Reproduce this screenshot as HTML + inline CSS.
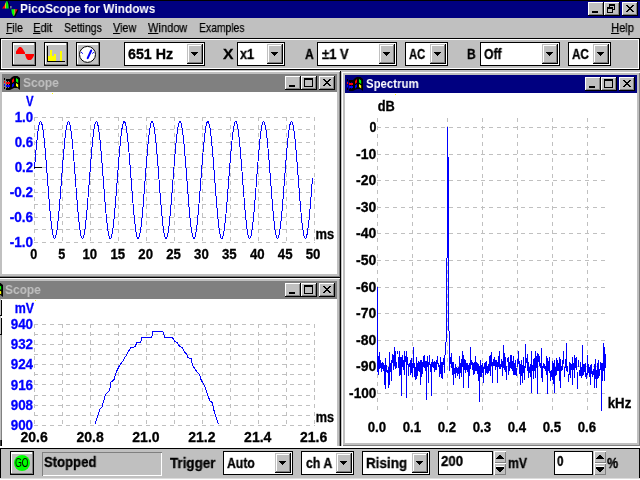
<!DOCTYPE html>
<html lang="en"><head><meta charset="utf-8"><title>PicoScope for Windows</title>
<style>
html,body{margin:0;padding:0}
body{width:640px;height:480px;overflow:hidden;background:#c0c0c0;position:relative;font-family:"Liberation Sans",sans-serif;color:#000}
div,.a{position:absolute}
svg{display:block;overflow:hidden;will-change:transform}
.t{will-change:transform;position:absolute;white-space:nowrap;line-height:1;transform-origin:0 0;display:block}
.t u{text-decoration:underline;text-underline-offset:1px}
.cb{background:#c0c0c0;box-shadow:inset -1px -1px 0 #000,inset 1px 1px 0 #fff,inset -2px -2px 0 #808080}
.cb i{position:absolute;background:#000;display:block}
.tbar{background:#c0c0c0;box-sizing:border-box;border:1px solid #000;box-shadow:inset 1px 1px 0 #fff,inset -1px -1px 0 #fff}
.tbar>div{margin:-1px 0 0 -1px}
.tbtn{background:#c0c0c0;box-sizing:border-box;border:1px solid #000;box-shadow:inset -1px -1px 0 #808080,inset 1px 2px 0 #fff}
.combo{background:#fff;box-sizing:border-box;border:1px solid #000}
.ddb{background:#c0c0c0;box-shadow:inset -1px -1px 0 #000,inset 1px 1px 0 #c0c0c0,inset -2px -2px 0 #808080,inset 2px 2px 0 #fff}
.win{background:#c0c0c0;box-shadow:inset 1px 1px 0 #c0c0c0,inset -1px -1px 0 #000,inset 2px 2px 0 #fff,inset -2px -2px 0 #808080}
.sp{background:#c0c0c0;box-shadow:inset 1px 1px 0 #fff,inset -1px -1px 0 #808080}
</style></head>
<body>
<div class="a" style="left:0px;top:0px;width:640px;height:1px;background:#000"></div>
<div class="a" style="left:0px;top:1px;width:640px;height:17px;background:#000080"></div>
<svg class="a" style="left:1px;top:0px" width="18" height="18" viewBox="0 0 18 18">
<defs><clipPath id="c1"><path d="M1 8.6 L3.5 5 L5.5 1 L6.2 1 L7.3 4 L8.2 8.6 Z"/></clipPath>
<clipPath id="c2"><path d="M10 9.2 L16.6 9.2 L15 12 L13 16 L12.3 16 L10.8 13 Z"/></clipPath></defs>
<path d="M6.2 1 L7.2 1 L9.4 6 L9.4 8.6 L8.2 8.6 L7.3 4 Z" fill="#000"/>
<path d="M16.6 9.2 L17.3 9.2 L17.3 11 L14.3 16.7 L12.3 16.7 L12.3 16 L13 16 L15 12 Z" fill="#000"/>
<rect x="9.4" y="6" width="1" height="2.4" fill="#c0c0c0"/><rect x="9.4" y="10.5" width="1" height="1" fill="#000"/>
<g clip-path="url(#c1)"><rect x="0" y="0" width="4.2" height="10" fill="#f00"/><rect x="4.2" y="0" width="1" height="10" fill="#ff0"/><rect x="5.2" y="0" width="2.3" height="10" fill="#0f0"/><rect x="7.5" y="0" width="1" height="10" fill="#008080"/></g>
<g clip-path="url(#c2)"><rect x="10" y="8" width="1" height="10" fill="#008080"/><rect x="10.8" y="8" width="2.6" height="10" fill="#0f0"/><rect x="13.4" y="8" width="1" height="10" fill="#ff0"/><rect x="14.4" y="8" width="3" height="10" fill="#f00"/></g>
</svg>
<span class="t" style="left:20.20px;top:2.40px;font-size:13px;font-weight:bold;color:#fff;transform:scaleX(0.9146)">PicoScope for Windows</span>
<div class="a cb" style="left:588px;top:2px;width:16px;height:14px;"><i style="left:4px;top:9px;width:6px;height:2px"></i></div>
<div class="a cb" style="left:604px;top:2px;width:16px;height:14px;"><i style="left:5px;top:2px;width:6px;height:6px;background:none;border:1px solid #000;border-top-width:2px;box-sizing:border-box"></i><i style="left:3px;top:5px;width:6px;height:6px;background:#c0c0c0;border:1px solid #000;border-top-width:2px;box-sizing:border-box"></i></div>
<div class="a cb" style="left:622px;top:2px;width:16px;height:14px;"><svg class="a" style="left:4px;top:3px" width="8" height="7" viewBox="0 0 8 7" shape-rendering="crispEdges"><path d="M0 0h2v1h1v1h2v-1h1v-1h2v1h-1v1h-1v1h-1v1h1v1h1v1h1v1h-2v-1h-1v-1h-2v1h-1v1h-2v-1h1v-1h1v-1h1v-1h-1v-1h-1v-1h-1z"/></svg></div>
<span class="t" style="left:5.79px;top:21.00px;font-size:13px;-webkit-text-stroke:0.25px;transform:scaleX(0.8064)"><u>F</u>ile</span>
<span class="t" style="left:32.85px;top:21.00px;font-size:13px;-webkit-text-stroke:0.25px;transform:scaleX(0.8536)"><u>E</u>dit</span>
<span class="t" style="left:64.10px;top:21.00px;font-size:13px;-webkit-text-stroke:0.25px;transform:scaleX(0.8047)">Settings</span>
<span class="t" style="left:113.45px;top:21.00px;font-size:13px;-webkit-text-stroke:0.25px;transform:scaleX(0.8353)"><u>V</u>iew</span>
<span class="t" style="left:148.45px;top:21.00px;font-size:13px;-webkit-text-stroke:0.25px;transform:scaleX(0.8506)"><u>W</u>indow</span>
<span class="t" style="left:199.40px;top:21.00px;font-size:13px;-webkit-text-stroke:0.25px;transform:scaleX(0.7971)">Examples</span>
<span class="t" style="left:611.34px;top:21.00px;font-size:13px;-webkit-text-stroke:0.25px;transform:scaleX(0.8586)"><u>H</u>elp</span>
<div class="a tbar" style="left:0px;top:38px;width:640px;height:32px;"><div class="a tbtn" style="left:12px;top:4px;width:24px;height:24px;"><svg class="a" style="left:0;top:0" width="22" height="22" viewBox="13 43 22 22"><path d="M16 54V51.5L17 50L18.5 47.7L19.5 47H21L22.5 48.5L24 51L25 52.5V54Z M25 54H34V55.5L33 57.5L31.5 59.5L30.5 60H28L26.5 58.5L25.5 56Z" fill="#f00"/></svg></div><div class="a tbtn" style="left:44px;top:4px;width:24px;height:24px;"><svg class="a" style="left:0;top:0" width="22" height="22" viewBox="13 43 22 22" shape-rendering="crispEdges"><path d="M47.5 46V61.5H65" transform="translate(-32 0)" fill="none" stroke="#000"/><path d="M16 61V56H18V50H20V56H21.5V54H24V61Z M28 51H30V61H28Z" fill="#ff0"/></svg></div><div class="a tbtn" style="left:76px;top:4px;width:24px;height:24px;"><svg class="a" style="left:0;top:0" width="22" height="22" viewBox="0 0 22 22"><circle cx="10.5" cy="11.4" r="8" fill="#fff" stroke="#000" stroke-width="1"/><path d="M14.2 7.5L10.7 15.1" stroke="#00f" stroke-width="2" stroke-linecap="round" fill="none"/><path d="M4 9l1.9 1.7M16.8 9l-1.4 1.7" stroke="#00f" stroke-width="1" fill="none"/></svg></div></div>
<div class="a combo" style="left:124px;top:42px;width:81px;height:24px;"><div class="a ddb" style="left:62px;top:1px;width:16px;height:20px;"><svg class="a" style="left:4px;top:8px" width="7" height="4" viewBox="0 0 7 4" shape-rendering="crispEdges"><path d="M0 0h7v1h-1v1h-1v1h-1v1h-1v-1h-1v-1h-1v-1h-1z"/></svg></div></div><span class="t" style="left:128.20px;top:47.15px;font-size:14px;font-weight:bold;-webkit-text-stroke:0.3px;transform:scaleX(1.0167)">651 Hz</span>
<span class="t" style="left:222.90px;top:47.15px;font-size:14px;font-weight:bold;-webkit-text-stroke:0.3px;transform:scaleX(1.1200)">X</span>
<div class="a combo" style="left:237px;top:42px;width:48px;height:24px;"><div class="a ddb" style="left:29px;top:1px;width:16px;height:20px;"><svg class="a" style="left:4px;top:8px" width="7" height="4" viewBox="0 0 7 4" shape-rendering="crispEdges"><path d="M0 0h7v1h-1v1h-1v1h-1v1h-1v-1h-1v-1h-1v-1h-1z"/></svg></div></div><span class="t" style="left:240.40px;top:47.15px;font-size:14px;font-weight:bold;-webkit-text-stroke:0.3px;transform:scaleX(0.9059)">x1</span>
<span class="t" style="left:304.70px;top:47.15px;font-size:14px;font-weight:bold;-webkit-text-stroke:0.3px;transform:scaleX(0.8600)">A</span>
<div class="a combo" style="left:317px;top:42px;width:80px;height:24px;"><div class="a ddb" style="left:61px;top:1px;width:16px;height:20px;"><svg class="a" style="left:4px;top:8px" width="7" height="4" viewBox="0 0 7 4" shape-rendering="crispEdges"><path d="M0 0h7v1h-1v1h-1v1h-1v1h-1v-1h-1v-1h-1v-1h-1z"/></svg></div></div><span class="t" style="left:321.70px;top:47.15px;font-size:14px;font-weight:bold;-webkit-text-stroke:0.3px;transform:scaleX(0.9316)">±1 V</span>
<div class="a combo" style="left:405px;top:42px;width:43px;height:24px;"><div class="a ddb" style="left:24px;top:1px;width:16px;height:20px;"><svg class="a" style="left:4px;top:8px" width="7" height="4" viewBox="0 0 7 4" shape-rendering="crispEdges"><path d="M0 0h7v1h-1v1h-1v1h-1v1h-1v-1h-1v-1h-1v-1h-1z"/></svg></div></div><span class="t" style="left:409.10px;top:47.15px;font-size:14px;font-weight:bold;-webkit-text-stroke:0.3px;transform:scaleX(0.8056)">AC</span>
<span class="t" style="left:466.70px;top:47.15px;font-size:14px;font-weight:bold;-webkit-text-stroke:0.3px;transform:scaleX(0.8600)">B</span>
<div class="a combo" style="left:480px;top:42px;width:80px;height:24px;"><div class="a ddb" style="left:61px;top:1px;width:16px;height:20px;"><svg class="a" style="left:4px;top:8px" width="7" height="4" viewBox="0 0 7 4" shape-rendering="crispEdges"><path d="M0 0h7v1h-1v1h-1v1h-1v1h-1v-1h-1v-1h-1v-1h-1z"/></svg></div></div><span class="t" style="left:484.45px;top:47.15px;font-size:14px;font-weight:bold;-webkit-text-stroke:0.3px;transform:scaleX(0.8685)">Off</span>
<div class="a combo" style="left:568px;top:42px;width:43px;height:24px;"><div class="a ddb" style="left:24px;top:1px;width:16px;height:20px;"><svg class="a" style="left:4px;top:8px" width="7" height="4" viewBox="0 0 7 4" shape-rendering="crispEdges"><path d="M0 0h7v1h-1v1h-1v1h-1v1h-1v-1h-1v-1h-1v-1h-1z"/></svg></div></div><span class="t" style="left:572.00px;top:47.15px;font-size:14px;font-weight:bold;-webkit-text-stroke:0.3px;transform:scaleX(0.8354)">AC</span>
<div class="a" style="left:0px;top:70px;width:640px;height:376px;overflow:hidden"><div class="a win" style="left:-19px;top:207px;width:360px;height:200px;"><div class="a" style="left:4px;top:4px;width:352px;height:18px;background:#808080"><svg class="a" style="left:1px;top:2px" width="17" height="14" viewBox="0 0 17 14"><rect x="1" y="2" width="1" height="2" fill="#000"/><rect x="1" y="5" width="1" height="2" fill="#f00"/><rect x="1" y="8" width="1" height="2" fill="#00f"/><rect x="1" y="11" width="1" height="2" fill="#000"/><rect x="3" y="3" width="4" height="2" fill="#000"/><rect x="3" y="6" width="4" height="2" fill="#f00"/><rect x="3" y="9" width="4" height="2" fill="#00f"/><rect x="3" y="12" width="4" height="2" fill="#000"/><rect x="4" y="5" width="1" height="1" fill="#000"/><rect x="6" y="5" width="1" height="1" fill="#000"/><rect x="4" y="8" width="1" height="1" fill="#000"/><rect x="6" y="8" width="1" height="1" fill="#000"/><rect x="4" y="11" width="1" height="1" fill="#000"/><rect x="6" y="11" width="1" height="1" fill="#000"/><path d="M7 3 L9 1 L11 0 L14.5 0 L17 2 L17 14 L14.5 12 L11 12 L9 13 L7 14 Z" fill="#000"/><path d="M9 4 L11 2 L11 5.5 L9 7 Z" fill="#f00"/><path d="M13 2 L15.2 3.5 L15.2 7 L13 5.5 Z" fill="#0f0"/><path d="M9 8.5 L11 7 L11 10 L9 11.5 Z" fill="#00f"/><path d="M13 7 L15.2 8.5 L15.2 11.5 L13 10 Z" fill="#ff0"/></svg><div class="a cb" style="left:300px;top:2px;width:16px;height:14px;"><i style="left:4px;top:9px;width:6px;height:2px"></i></div><div class="a cb" style="left:316px;top:2px;width:16px;height:14px;"><i style="left:3px;top:2px;width:9px;height:9px;background:none;border:1px solid #000;border-top-width:2px;box-sizing:border-box"></i></div><div class="a cb" style="left:334px;top:2px;width:16px;height:14px;"><svg class="a" style="left:4px;top:3px" width="8" height="7" viewBox="0 0 8 7" shape-rendering="crispEdges"><path d="M0 0h2v1h1v1h2v-1h1v-1h2v1h-1v1h-1v1h-1v1h1v1h1v1h1v1h-2v-1h-1v-1h-2v1h-1v1h-2v-1h1v-1h1v-1h1v-1h-1v-1h-1v-1h-1z"/></svg></div></div><div class="a" style="left:4px;top:22px;width:352px;height:174px;background:#fff;overflow:hidden"><svg class="a" style="left:0;top:0" width="352" height="170" viewBox="-15 299 352 170"><g stroke="#c0c0c0" stroke-dasharray="4 4" shape-rendering="crispEdges" fill="none"><path d="M34.5 324V426M62.5 324V426M90.5 324V426M118.5 324V426M146.5 324V426M174.5 324V426M202.5 324V426M230.5 324V426M258.5 324V426M286.5 324V426M314.5 324V426M34 324.5H315M34 334.5H315M34 344.5H315M34 354.5H315M34 364.5H315M34 374.5H315M34 384.5H315M34 395.5H315M34 405.5H315M34 415.5H315M34 425.5H315"/></g><path d="M94.8 424.5L99.8 409.2L102.0 407.0L105.3 395.0L109.7 390.6L110.8 382.3L114.0 379.7L115.8 373.1L119.5 365.5L122.5 361.5L126.1 355.6L130.5 348.0L134.8 346.9L137.0 342.5L140.7 342.3L142.0 337.5L151.7 337.5L152.8 331.5L162.7 331.5L164.8 337.5L172.5 337.5L174.7 341.4L177.3 342.5L179.5 346.4L182.3 347.3L184.5 352.3L186.7 353.9L187.8 357.8L191.1 358.3L192.6 365.5L195.5 369.8L199.8 375.3L200.5 378.6L204.9 386.7L209.7 400.5L212.3 402.7L213.6 409.2L218.4 424.5" stroke="#00f" stroke-width="1" fill="none" shape-rendering="crispEdges"/><g font-family="'Liberation Sans',sans-serif"><text transform="translate(14.70 312.50) scale(0.8909 1)" font-size="14" font-weight="bold" fill="#00f" stroke="#00f" stroke-width=".3">mV</text><text transform="translate(10.70 329.00) scale(0.9588 1)" font-size="14" font-weight="bold" fill="#00f" stroke="#00f" stroke-width=".3">940</text><text transform="translate(10.70 349.00) scale(0.9588 1)" font-size="14" font-weight="bold" fill="#00f" stroke="#00f" stroke-width=".3">932</text><text transform="translate(10.70 369.00) scale(0.9588 1)" font-size="14" font-weight="bold" fill="#00f" stroke="#00f" stroke-width=".3">924</text><text transform="translate(10.70 389.50) scale(0.9588 1)" font-size="14" font-weight="bold" fill="#00f" stroke="#00f" stroke-width=".3">916</text><text transform="translate(10.70 410.00) scale(0.9588 1)" font-size="14" font-weight="bold" fill="#00f" stroke="#00f" stroke-width=".3">908</text><text transform="translate(10.70 430.00) scale(0.9588 1)" font-size="14" font-weight="bold" fill="#00f" stroke="#00f" stroke-width=".3">900</text><text transform="translate(20.50 442.00) scale(1.0014 1)" font-size="14" font-weight="bold" stroke="#000" stroke-width=".3">20.6</text><text transform="translate(76.40 442.00) scale(1.0014 1)" font-size="14" font-weight="bold" stroke="#000" stroke-width=".3">20.8</text><text transform="translate(132.30 442.00) scale(1.0014 1)" font-size="14" font-weight="bold" stroke="#000" stroke-width=".3">21.0</text><text transform="translate(188.20 442.00) scale(1.0014 1)" font-size="14" font-weight="bold" stroke="#000" stroke-width=".3">21.2</text><text transform="translate(244.10 442.00) scale(1.0014 1)" font-size="14" font-weight="bold" stroke="#000" stroke-width=".3">21.4</text><text transform="translate(300.00 442.00) scale(1.0014 1)" font-size="14" font-weight="bold" stroke="#000" stroke-width=".3">21.6</text><text transform="translate(315.70 422.00) scale(0.9096 1)" font-size="14" font-weight="bold" stroke="#000" stroke-width=".3">ms</text></g><rect x="35" y="300" width="1" height="1" fill="#ff0"/><g shape-rendering="crispEdges"><path d="M0.5 299V446" stroke="#c0c0c0"/><path d="M1.5 300V316M1.5 318V335M0 315.5H2M0 334.5H2" stroke="#000"/><path d="M1.5 335V440" stroke="#808080"/><path d="M1.5 440V446" stroke="#000"/><path d="M0.5 440V446" stroke="#404040"/></g></svg></div></div><div class="a win" style="left:-2px;top:0px;width:343px;height:208px;"><div class="a" style="left:4px;top:4px;width:335px;height:18px;background:#808080"><svg class="a" style="left:1px;top:2px" width="17" height="14" viewBox="0 0 17 14"><rect x="1" y="2" width="1" height="2" fill="#000"/><rect x="1" y="5" width="1" height="2" fill="#f00"/><rect x="1" y="8" width="1" height="2" fill="#00f"/><rect x="1" y="11" width="1" height="2" fill="#000"/><rect x="3" y="3" width="4" height="2" fill="#000"/><rect x="3" y="6" width="4" height="2" fill="#f00"/><rect x="3" y="9" width="4" height="2" fill="#00f"/><rect x="3" y="12" width="4" height="2" fill="#000"/><rect x="4" y="5" width="1" height="1" fill="#000"/><rect x="6" y="5" width="1" height="1" fill="#000"/><rect x="4" y="8" width="1" height="1" fill="#000"/><rect x="6" y="8" width="1" height="1" fill="#000"/><rect x="4" y="11" width="1" height="1" fill="#000"/><rect x="6" y="11" width="1" height="1" fill="#000"/><path d="M7 3 L9 1 L11 0 L14.5 0 L17 2 L17 14 L14.5 12 L11 12 L9 13 L7 14 Z" fill="#000"/><path d="M9 4 L11 2 L11 5.5 L9 7 Z" fill="#f00"/><path d="M13 2 L15.2 3.5 L15.2 7 L13 5.5 Z" fill="#0f0"/><path d="M9 8.5 L11 7 L11 10 L9 11.5 Z" fill="#00f"/><path d="M13 7 L15.2 8.5 L15.2 11.5 L13 10 Z" fill="#ff0"/></svg><div class="a cb" style="left:283px;top:2px;width:16px;height:14px;"><i style="left:4px;top:9px;width:6px;height:2px"></i></div><div class="a cb" style="left:299px;top:2px;width:16px;height:14px;"><i style="left:3px;top:2px;width:9px;height:9px;background:none;border:1px solid #000;border-top-width:2px;box-sizing:border-box"></i></div><div class="a cb" style="left:317px;top:2px;width:16px;height:14px;"><svg class="a" style="left:4px;top:3px" width="8" height="7" viewBox="0 0 8 7" shape-rendering="crispEdges"><path d="M0 0h2v1h1v1h2v-1h1v-1h2v1h-1v1h-1v1h-1v1h1v1h1v1h1v1h-2v-1h-1v-1h-2v1h-1v1h-2v-1h1v-1h1v-1h1v-1h-1v-1h-1v-1h-1z"/></svg></div></div><div class="a" style="left:4px;top:22px;width:335px;height:182px;background:#fff;overflow:hidden"><svg class="a" style="left:0;top:0" width="335" height="182" viewBox="2 92 335 182"><g stroke="#c0c0c0" stroke-dasharray="4 4" shape-rendering="crispEdges" fill="none"><path d="M34.5 117V243M62.5 117V243M90.5 117V243M118.5 117V243M146.5 117V243M174.5 117V243M202.5 117V243M230.5 117V243M258.5 117V243M286.5 117V243M314.5 117V243M34 117.5H315M34 129.5H315M34 142.5H315M34 154.5H315M34 167.5H315M34 179.5H315M34 192.5H315M34 204.5H315M34 217.5H315M34 229.5H315M34 242.5H315"/></g><path d="M34.5 168.6L35.0 162.2L35.5 156.1L36.0 150.2L36.5 144.8L37.0 139.7L37.5 135.2L38.0 131.3L38.5 127.9L39.0 125.3L39.5 123.3L40.0 122.0L40.5 121.5L41.0 121.7L41.5 122.7L42.0 124.4L42.5 126.8L43.0 129.9L43.5 133.6L44.0 137.9L44.5 142.7L45.0 148.0L45.5 153.7L46.0 159.8L46.5 166.1L47.0 172.5L47.5 179.1L48.0 185.7L48.5 192.2L49.0 198.6L49.5 204.7L50.0 210.5L50.5 215.9L51.0 220.9L51.5 225.3L52.0 229.2L52.5 232.5L53.0 235.0L53.5 236.9L54.0 238.1L54.5 238.5L55.0 238.2L55.5 237.1L56.0 235.3L56.5 232.9L57.0 229.7L57.5 225.9L58.0 221.5L58.5 216.6L59.0 211.3L59.5 205.5L60.0 199.4L60.5 193.1L61.0 186.6L61.5 180.0L62.0 173.5L62.5 167.0L63.0 160.6L63.5 154.5L64.0 148.8L64.5 143.4L65.0 138.5L65.5 134.1L66.0 130.3L66.5 127.2L67.0 124.7L67.5 122.9L68.0 121.8L68.5 121.5L69.0 121.9L69.5 123.1L70.0 124.9L70.5 127.5L71.0 130.8L71.5 134.6L72.0 139.1L72.5 144.0L73.0 149.4L73.5 155.3L74.0 161.4L74.5 167.7L75.0 174.2L75.5 180.8L76.0 187.4L76.5 193.9L77.0 200.2L77.5 206.2L78.0 211.9L78.5 217.3L79.0 222.1L79.5 226.4L80.0 230.1L80.5 233.2L81.0 235.6L81.5 237.3L82.0 238.3L82.5 238.5L83.0 238.0L83.5 236.7L84.0 234.8L84.5 232.1L85.0 228.8L85.5 224.8L86.0 220.3L86.5 215.3L87.0 209.8L87.5 204.0L88.0 197.8L88.5 191.4L89.0 184.9L89.5 178.3L90.0 171.8L90.5 165.3L91.0 159.0L91.5 153.0L92.0 147.3L92.5 142.1L93.0 137.3L93.5 133.1L94.0 129.5L94.5 126.5L95.0 124.1L95.5 122.5L96.0 121.7L96.5 121.5L97.0 122.1L97.5 123.5L98.0 125.5L98.5 128.3L99.0 131.7L99.5 135.7L100.0 140.3L100.5 145.4L101.0 150.9L101.5 156.8L102.0 163.0L102.5 169.4L103.0 175.9L103.5 182.5L104.0 189.1L104.5 195.5L105.0 201.8L105.5 207.8L106.0 213.4L106.5 218.6L107.0 223.3L107.5 227.4L108.0 231.0L108.5 233.9L109.0 236.1L109.5 237.6L110.0 238.4L110.5 238.4L111.0 237.7L111.5 236.3L112.0 234.1L112.5 231.3L113.0 227.8L113.5 223.7L114.0 219.1L114.5 213.9L115.0 208.3L115.5 202.4L116.0 196.2L116.5 189.7L117.0 183.2L117.5 176.6L118.0 170.1L118.5 163.6L119.0 157.4L119.5 151.5L120.0 145.9L120.5 140.8L121.0 136.2L121.5 132.1L122.0 128.6L122.5 125.8L123.0 123.7L123.5 122.2L124.0 121.6L124.5 121.6L125.0 122.4L125.5 124.0L126.0 126.2L126.5 129.1L127.0 132.7L127.5 136.9L128.0 141.6L128.5 146.8L129.0 152.4L129.5 158.4L130.0 164.7L130.5 171.1L131.0 177.7L131.5 184.2L132.0 190.8L132.5 197.2L133.0 203.4L133.5 209.3L134.0 214.8L134.5 219.8L135.0 224.4L135.5 228.4L136.0 231.8L136.5 234.5L137.0 236.6L137.5 237.9L138.0 238.5L138.5 238.3L139.0 237.4L139.5 235.8L140.0 233.5L140.5 230.4L141.0 226.8L141.5 222.5L142.0 217.8L142.5 212.5L143.0 206.8L143.5 200.8L144.0 194.5L144.5 188.1L145.0 181.5L145.5 174.9L146.0 168.4L146.5 162.0L147.0 155.9L147.5 150.0L148.0 144.6L148.5 139.5L149.0 135.0L149.5 131.1L150.0 127.8L150.5 125.2L151.0 123.2L151.5 122.0L152.0 121.5L152.5 121.8L153.0 122.8L153.5 124.5L154.0 126.9L154.5 130.0L155.0 133.7L155.5 138.0L156.0 142.9L156.5 148.2L157.0 153.9L157.5 160.0L158.0 166.3L158.5 172.8L159.0 179.4L159.5 186.0L160.0 192.5L160.5 198.8L161.0 204.9L161.5 210.7L162.0 216.1L162.5 221.1L163.0 225.5L163.5 229.3L164.0 232.6L164.5 235.1L165.0 237.0L165.5 238.1L166.0 238.5L166.5 238.2L167.0 237.1L167.5 235.3L168.0 232.7L168.5 229.6L169.0 225.7L169.5 221.4L170.0 216.4L170.5 211.1L171.0 205.3L171.5 199.2L172.0 192.9L172.5 186.4L173.0 179.8L173.5 173.2L174.0 166.7L174.5 160.4L175.0 154.3L175.5 148.6L176.0 143.2L176.5 138.3L177.0 134.0L177.5 130.2L178.0 127.1L178.5 124.6L179.0 122.8L179.5 121.8L180.0 121.5L180.5 121.9L181.0 123.1L181.5 125.0L182.0 127.6L182.5 130.9L183.0 134.8L183.5 139.3L184.0 144.2L184.5 149.7L185.0 155.5L185.5 161.6L186.0 168.0L186.5 174.5L187.0 181.1L187.5 187.7L188.0 194.1L188.5 200.4L189.0 206.5L189.5 212.2L190.0 217.5L190.5 222.3L191.0 226.6L191.5 230.2L192.0 233.3L192.5 235.7L193.0 237.3L193.5 238.3L194.0 238.5L194.5 237.9L195.0 236.7L195.5 234.7L196.0 232.0L196.5 228.6L197.0 224.7L197.5 220.1L198.0 215.1L198.5 209.6L199.0 203.7L199.5 197.6L200.0 191.2L200.5 184.6L201.0 178.1L201.5 171.5L202.0 165.0L202.5 158.8L203.0 152.8L203.5 147.1L204.0 141.9L204.5 137.1L205.0 132.9L205.5 129.3L206.0 126.4L206.5 124.1L207.0 122.5L207.5 121.7L208.0 121.5L208.5 122.2L209.0 123.6L209.5 125.6L210.0 128.4L210.5 131.9L211.0 135.9L211.5 140.5L212.0 145.6L212.5 151.2L213.0 157.1L213.5 163.3L214.0 169.7L214.5 176.2L215.0 182.8L215.5 189.4L216.0 195.8L216.5 202.0L217.0 208.0L217.5 213.6L218.0 218.8L218.5 223.4L219.0 227.6L219.5 231.1L220.0 234.0L220.5 236.2L221.0 237.7L221.5 238.4L222.0 238.4L222.5 237.7L223.0 236.2L223.5 234.0L224.0 231.2L224.5 227.7L225.0 223.5L225.5 218.9L226.0 213.7L226.5 208.1L227.0 202.2L227.5 195.9L228.0 189.5L228.5 182.9L229.0 176.3L229.5 169.8L230.0 163.4L230.5 157.2L231.0 151.3L231.5 145.7L232.0 140.6L232.5 136.0L233.0 131.9L233.5 128.5L234.0 125.7L234.5 123.6L235.0 122.2L235.5 121.6L236.0 121.6L236.5 122.5L237.0 124.0L237.5 126.3L238.0 129.3L238.5 132.9L239.0 137.0L239.5 141.8L240.0 147.0L240.5 152.7L241.0 158.6L241.5 164.9L242.0 171.4L242.5 177.9L243.0 184.5L243.5 191.0L244.0 197.4L244.5 203.6L245.0 209.5L245.5 215.0L246.0 220.0L246.5 224.6L247.0 228.6L247.5 231.9L248.0 234.6L248.5 236.6L249.0 237.9L249.5 238.5L250.0 238.3L250.5 237.4L251.0 235.7L251.5 233.4L252.0 230.3L252.5 226.6L253.0 222.4L253.5 217.6L254.0 212.3L254.5 206.6L255.0 200.6L255.5 194.3L256.0 187.8L256.5 181.2L257.0 174.6L257.5 168.1L258.0 161.7L258.5 155.6L259.0 149.8L259.5 144.3L260.0 139.4L260.5 134.9L261.0 131.0L261.5 127.7L262.0 125.1L262.5 123.2L263.0 122.0L263.5 121.5L264.0 121.8L264.5 122.8L265.0 124.6L265.5 127.0L266.0 130.1L266.5 133.9L267.0 138.2L267.5 143.1L268.0 148.4L268.5 154.2L269.0 160.3L269.5 166.6L270.0 173.1L270.5 179.6L271.0 186.2L271.5 192.7L272.0 199.1L272.5 205.2L273.0 210.9L273.5 216.3L274.0 221.3L274.5 225.7L275.0 229.5L275.5 232.7L276.0 235.2L276.5 237.0L277.0 238.1L277.5 238.5L278.0 238.1L278.5 237.0L279.0 235.2L279.5 232.6L280.0 229.4L280.5 225.6L281.0 221.2L281.5 216.2L282.0 210.8L282.5 205.0L283.0 198.9L283.5 192.6L284.0 186.1L284.5 179.5L285.0 172.9L285.5 166.4L286.0 160.1L286.5 154.1L287.0 148.3L287.5 143.0L288.0 138.1L288.5 133.8L289.0 130.1L289.5 127.0L290.0 124.5L290.5 122.8L291.0 121.8L291.5 121.5L292.0 122.0L292.5 123.2L293.0 125.1L293.5 127.8L294.0 131.0L294.5 135.0L295.0 139.4L295.5 144.4L296.0 149.9L296.5 155.7L297.0 161.9L297.5 168.2L298.0 174.8L298.5 181.4L299.0 187.9L299.5 194.4L300.0 200.7L300.5 206.7L301.0 212.4L301.5 217.7L302.0 222.5L302.5 226.7L303.0 230.4L303.5 233.4L304.0 235.8L304.5 237.4L305.0 238.3L305.5 238.5L306.0 237.9L306.5 236.6L307.0 234.6L307.5 231.9L308.0 228.5L308.5 224.5L309.0 219.9L309.5 214.9L310.0 209.4L310.5 203.5L311.0 197.3L311.5 190.9L312.0 184.4L312.5 177.8" stroke="#00f" stroke-width="1" fill="none" shape-rendering="crispEdges"/><rect x="34" y="167" width="8" height="1" fill="#000"/><g font-family="'Liberation Sans',sans-serif"><text transform="translate(25.95 105.90) scale(0.8100 1)" font-size="14" font-weight="bold" fill="#00f" stroke="#00f" stroke-width=".3">V</text><text transform="translate(14.70 122.00) scale(0.9504 1)" font-size="14" font-weight="bold" fill="#00f" stroke="#00f" stroke-width=".3">1.0</text><text transform="translate(14.70 147.00) scale(0.9504 1)" font-size="14" font-weight="bold" fill="#00f" stroke="#00f" stroke-width=".3">0.6</text><text transform="translate(14.70 172.00) scale(0.9504 1)" font-size="14" font-weight="bold" fill="#00f" stroke="#00f" stroke-width=".3">0.2</text><text transform="translate(9.80 197.00) scale(0.9697 1)" font-size="14" font-weight="bold" fill="#00f" stroke="#00f" stroke-width=".3">-0.2</text><text transform="translate(9.80 222.00) scale(0.9697 1)" font-size="14" font-weight="bold" fill="#00f" stroke="#00f" stroke-width=".3">-0.6</text><text transform="translate(9.80 247.00) scale(0.9697 1)" font-size="14" font-weight="bold" fill="#00f" stroke="#00f" stroke-width=".3">-1.0</text><text transform="translate(30.30 258.80) scale(0.9000 1)" font-size="14" font-weight="bold" stroke="#000" stroke-width=".3">0</text><text transform="translate(58.20 258.80) scale(0.9000 1)" font-size="14" font-weight="bold" stroke="#000" stroke-width=".3">5</text><text transform="translate(82.50 258.80) scale(0.9439 1)" font-size="14" font-weight="bold" stroke="#000" stroke-width=".3">10</text><text transform="translate(110.40 258.80) scale(0.9439 1)" font-size="14" font-weight="bold" stroke="#000" stroke-width=".3">15</text><text transform="translate(138.30 258.80) scale(0.9439 1)" font-size="14" font-weight="bold" stroke="#000" stroke-width=".3">20</text><text transform="translate(166.20 258.80) scale(0.9439 1)" font-size="14" font-weight="bold" stroke="#000" stroke-width=".3">25</text><text transform="translate(194.10 258.80) scale(0.9439 1)" font-size="14" font-weight="bold" stroke="#000" stroke-width=".3">30</text><text transform="translate(222.00 258.80) scale(0.9439 1)" font-size="14" font-weight="bold" stroke="#000" stroke-width=".3">35</text><text transform="translate(249.90 258.80) scale(0.9439 1)" font-size="14" font-weight="bold" stroke="#000" stroke-width=".3">40</text><text transform="translate(277.80 258.80) scale(0.9439 1)" font-size="14" font-weight="bold" stroke="#000" stroke-width=".3">45</text><text transform="translate(305.70 258.80) scale(0.9439 1)" font-size="14" font-weight="bold" stroke="#000" stroke-width=".3">50</text><text transform="translate(315.40 239.10) scale(0.9243 1)" font-size="14" font-weight="bold" stroke="#000" stroke-width=".3">ms</text></g><rect x="52" y="93" width="1" height="1" fill="#ff0"/></svg></div></div><div class="a win" style="left:341px;top:1px;width:300px;height:376px;"><div class="a" style="left:4px;top:4px;width:292px;height:18px;background:#000080"><svg class="a" style="left:1px;top:2px" width="17" height="14" viewBox="0 0 17 14"><rect x="1" y="2" width="1" height="2" fill="#000"/><rect x="1" y="5" width="1" height="2" fill="#f00"/><rect x="1" y="8" width="1" height="2" fill="#00f"/><rect x="1" y="11" width="1" height="2" fill="#000"/><rect x="3" y="3" width="4" height="2" fill="#000"/><rect x="3" y="6" width="4" height="2" fill="#f00"/><rect x="3" y="9" width="4" height="2" fill="#00f"/><rect x="3" y="12" width="4" height="2" fill="#000"/><rect x="4" y="5" width="1" height="1" fill="#000"/><rect x="6" y="5" width="1" height="1" fill="#000"/><rect x="4" y="8" width="1" height="1" fill="#000"/><rect x="6" y="8" width="1" height="1" fill="#000"/><rect x="4" y="11" width="1" height="1" fill="#000"/><rect x="6" y="11" width="1" height="1" fill="#000"/><path d="M7 3 L9 1 L11 0 L14.5 0 L17 2 L17 14 L14.5 12 L11 12 L9 13 L7 14 Z" fill="#000"/><path d="M9 4 L11 2 L11 5.5 L9 7 Z" fill="#f00"/><path d="M13 2 L15.2 3.5 L15.2 7 L13 5.5 Z" fill="#0f0"/><path d="M9 8.5 L11 7 L11 10 L9 11.5 Z" fill="#00f"/><path d="M13 7 L15.2 8.5 L15.2 11.5 L13 10 Z" fill="#ff0"/></svg><div class="a cb" style="left:240px;top:2px;width:16px;height:14px;"><i style="left:4px;top:9px;width:6px;height:2px"></i></div><div class="a cb" style="left:256px;top:2px;width:16px;height:14px;"><i style="left:3px;top:2px;width:9px;height:9px;background:none;border:1px solid #000;border-top-width:2px;box-sizing:border-box"></i></div><div class="a cb" style="left:274px;top:2px;width:16px;height:14px;"><svg class="a" style="left:4px;top:3px" width="8" height="7" viewBox="0 0 8 7" shape-rendering="crispEdges"><path d="M0 0h2v1h1v1h2v-1h1v-1h2v1h-1v1h-1v1h-1v1h1v1h1v1h1v1h-2v-1h-1v-1h-2v1h-1v1h-2v-1h1v-1h1v-1h1v-1h-1v-1h-1v-1h-1z"/></svg></div></div><div class="a" style="left:4px;top:22px;width:292px;height:350px;background:#fff;overflow:hidden"><svg class="a" style="left:0;top:0" width="292" height="350" viewBox="345 93 292 350"><g stroke="#c0c0c0" stroke-dasharray="4 4" shape-rendering="crispEdges" fill="none"><path d="M377.5 118V411M412.5 118V411M447.5 118V411M482.5 118V411M517.5 118V411M552.5 118V411M587.5 118V411M377 127.5H606M377 154.5H606M377 180.5H606M377 207.5H606M377 233.5H606M377 260.5H606M377 287.5H606M377 313.5H606M377 340.5H606M377 366.5H606M377 393.5H606"/></g><path d="M378.5 356V375M379.5 352V369M380.5 360V368M381.5 363V372M382.5 362V369M383.5 363V371M384.5 365V385M385.5 358V389M386.5 365V372M387.5 370V373M388.5 367V388M389.5 352V385M390.5 363V372M391.5 360V381M392.5 354V363M393.5 355V370M394.5 347V366M395.5 351V369M396.5 362V368M397.5 351V354M398.5 357V368M399.5 351V376M400.5 357V375M401.5 357V396M402.5 355V367M403.5 360V370M404.5 351V375M405.5 356V362M406.5 351V398M407.5 357V365M408.5 364V376M409.5 363V367M410.5 360V375M411.5 358V373M412.5 363V377M413.5 347V368M414.5 363V377M415.5 367V380M416.5 357V379M417.5 363V376M418.5 361V371M419.5 362V372M420.5 360V385M421.5 360V377M422.5 362V374M423.5 356V367M424.5 355V368M425.5 361V371M426.5 361V400M427.5 356V367M428.5 362V383M429.5 355V365M430.5 364V372M431.5 362V396M432.5 359V367M433.5 362V368M434.5 361V372M435.5 362V370M436.5 360V370M437.5 356V364M438.5 363V367M439.5 365V377M440.5 357V374M441.5 362V378M442.5 362V379M443.5 358V365M450.5 357V364M451.5 353V368M452.5 362V375M453.5 362V385M454.5 368V374M455.5 364V378M456.5 367V373M457.5 368V376M458.5 367V374M459.5 356V379M460.5 363V373M461.5 359V377M462.5 351V367M463.5 355V388M464.5 359V370M465.5 360V373M466.5 363V370M467.5 363V372M468.5 365V388M469.5 363V376M470.5 347V369M471.5 360V365M472.5 362V370M473.5 363V375M474.5 362V374M475.5 356V371M476.5 362V371M477.5 363V374M478.5 364V381M479.5 366V402M480.5 360V377M481.5 365V377M482.5 363V373M483.5 367V383M484.5 363V369M485.5 362V375M486.5 361V373M487.5 366V374M488.5 364V373M489.5 356V371M490.5 355V376M491.5 352V366M492.5 362V383M493.5 359V366M494.5 357V366M495.5 360V370M496.5 360V367M497.5 362V383M498.5 356V367M499.5 351V369M500.5 364V369M501.5 359V367M502.5 361V376M503.5 345V368M504.5 353V370M505.5 357V372M506.5 366V380M507.5 358V362M508.5 357V375M509.5 362V371M510.5 355V368M511.5 355V369M512.5 361V371M513.5 356V375M514.5 363V375M515.5 360V375M516.5 368V376M517.5 359V367M518.5 351V364M519.5 361V374M520.5 364V385M521.5 360V376M522.5 365V383M523.5 357V373M524.5 366V380M525.5 344V368M526.5 358V363M527.5 354V371M528.5 362V378M529.5 367V373M530.5 364V377M531.5 351V393M532.5 365V371M533.5 359V379M534.5 358V371M535.5 351V378M536.5 356V368M537.5 353V394M538.5 354V362M539.5 356V366M540.5 363V368M541.5 348V378M542.5 366V382M543.5 363V368M544.5 364V369M545.5 366V371M546.5 356V375M547.5 358V394M548.5 361V371M549.5 357V373M550.5 371V381M551.5 370V377M552.5 361V380M553.5 363V384M554.5 360V393M555.5 367V376M556.5 358V375M557.5 360V371M558.5 363V371M559.5 357V381M560.5 359V388M561.5 366V371M562.5 360V370M563.5 351V364M564.5 367V377M565.5 359V368M566.5 343V371M567.5 366V372M568.5 374V382M569.5 362V375M570.5 363V378M571.5 364V370M572.5 357V385M573.5 363V370M574.5 355V378M575.5 358V368M576.5 357V370M577.5 372V389M578.5 360V367M579.5 370V376M580.5 362V376M581.5 367V378M582.5 345V376M583.5 364V375M584.5 364V372M585.5 363V377M586.5 373V379M587.5 355V375M588.5 364V373M589.5 367V377M590.5 365V385M591.5 364V374M592.5 371V377M593.5 369V375M594.5 364V388M595.5 359V379M596.5 370V388M597.5 363V379M598.5 360V378M599.5 369V376M600.5 362V370M601.5 363V411M602.5 363V381M603.5 343V371M604.5 347V381M605.5 354V368M377.5 287V372" stroke="#00f" stroke-width="1" fill="none" shape-rendering="crispEdges"/><g fill="#00f" shape-rendering="crispEdges"><rect x="447" y="127" width="1" height="31"/><rect x="447" y="157" width="2" height="101"/><rect x="446" y="258" width="1" height="84"/><rect x="448" y="258" width="1" height="73"/><rect x="445" y="342" width="1" height="13"/><rect x="449" y="331" width="1" height="26"/><rect x="444" y="355" width="1" height="18"/><rect x="449" y="357" width="1" height="14"/></g><g font-family="'Liberation Sans',sans-serif"><text transform="translate(377.70 110.80) scale(0.9164 1)" font-size="14" font-weight="bold" stroke="#000" stroke-width=".3">dB</text><text transform="translate(369.45 132.10) scale(0.8938 1)" font-size="14" font-weight="bold" stroke="#000" stroke-width=".3">0</text><text transform="translate(356.10 158.69) scale(1.0025 1)" font-size="14" font-weight="bold" stroke="#000" stroke-width=".3">-10</text><text transform="translate(356.10 185.27) scale(1.0025 1)" font-size="14" font-weight="bold" stroke="#000" stroke-width=".3">-20</text><text transform="translate(356.10 211.86) scale(1.0025 1)" font-size="14" font-weight="bold" stroke="#000" stroke-width=".3">-30</text><text transform="translate(356.10 238.44) scale(1.0025 1)" font-size="14" font-weight="bold" stroke="#000" stroke-width=".3">-40</text><text transform="translate(356.10 265.03) scale(1.0025 1)" font-size="14" font-weight="bold" stroke="#000" stroke-width=".3">-50</text><text transform="translate(356.10 291.61) scale(1.0025 1)" font-size="14" font-weight="bold" stroke="#000" stroke-width=".3">-60</text><text transform="translate(356.10 318.19) scale(1.0025 1)" font-size="14" font-weight="bold" stroke="#000" stroke-width=".3">-70</text><text transform="translate(356.10 344.78) scale(1.0025 1)" font-size="14" font-weight="bold" stroke="#000" stroke-width=".3">-80</text><text transform="translate(356.10 371.37) scale(1.0025 1)" font-size="14" font-weight="bold" stroke="#000" stroke-width=".3">-90</text><text transform="translate(349.10 397.95) scale(0.9740 1)" font-size="14" font-weight="bold" stroke="#000" stroke-width=".3">-100</text><text transform="translate(367.70 432.20) scale(0.9453 1)" font-size="14" font-weight="bold" stroke="#000" stroke-width=".3">0.0</text><text transform="translate(402.70 432.20) scale(0.9453 1)" font-size="14" font-weight="bold" stroke="#000" stroke-width=".3">0.1</text><text transform="translate(437.70 432.20) scale(0.9453 1)" font-size="14" font-weight="bold" stroke="#000" stroke-width=".3">0.2</text><text transform="translate(472.70 432.20) scale(0.9453 1)" font-size="14" font-weight="bold" stroke="#000" stroke-width=".3">0.3</text><text transform="translate(507.70 432.20) scale(0.9453 1)" font-size="14" font-weight="bold" stroke="#000" stroke-width=".3">0.4</text><text transform="translate(542.70 432.20) scale(0.9453 1)" font-size="14" font-weight="bold" stroke="#000" stroke-width=".3">0.5</text><text transform="translate(577.70 432.20) scale(0.9453 1)" font-size="14" font-weight="bold" stroke="#000" stroke-width=".3">0.6</text><text transform="translate(607.70 408.00) scale(0.9479 1)" font-size="14" font-weight="bold" stroke="#000" stroke-width=".3">kHz</text></g><rect x="395" y="94" width="1" height="1" fill="#ff0"/></svg></div></div></div>
<span class="t" style="left:22.70px;top:76.30px;font-size:13px;font-weight:bold;color:#c0c0c0;transform:scaleX(0.9179)">Scope</span>
<span class="t" style="left:4.70px;top:283.20px;font-size:13px;font-weight:bold;color:#c0c0c0;transform:scaleX(0.9179)">Scope</span>
<span class="t" style="left:365.70px;top:77.30px;font-size:13px;font-weight:bold;color:#fff;transform:scaleX(0.8771)">Spectrum</span>
<div class="a" style="left:0px;top:446px;width:640px;height:2px;background:#fff"></div>
<div class="a" style="left:0px;top:448px;width:640px;height:30px;background:#c0c0c0;border:1px solid #000;border-bottom:none;box-sizing:border-box"></div>
<div class="a" style="left:0px;top:478px;width:640px;height:1px;background:#dcdcdc"></div>
<div class="a" style="left:0px;top:479px;width:640px;height:1px;background:#fff"></div>
<div class="a tbtn" style="left:10px;top:451px;width:24px;height:24px;"><svg class="a" style="left:2px;top:2px" width="18" height="18" viewBox="0 0 18 18"><circle cx="9" cy="9" r="8" fill="#0f0"/></svg></div>
<span class="t" style="left:15.00px;top:457.14px;font-size:12px;transform:scaleX(0.7254)">GO</span>
<div class="a" style="left:42px;top:452px;width:120px;height:24px;box-shadow:inset 1px 1px 0 #808080,inset -1px -1px 0 #fff"></div>
<span class="t" style="left:44.45px;top:454.75px;font-size:14px;font-weight:bold;-webkit-text-stroke:0.3px;transform:scaleX(0.9352)">Stopped</span>
<span class="t" style="left:169.95px;top:455.95px;font-size:14px;font-weight:bold;-webkit-text-stroke:0.3px;transform:scaleX(0.9572)">Trigger</span>
<div class="a combo" style="left:223px;top:451px;width:70px;height:24px;"><div class="a ddb" style="left:51px;top:1px;width:16px;height:20px;"><svg class="a" style="left:4px;top:8px" width="7" height="4" viewBox="0 0 7 4" shape-rendering="crispEdges"><path d="M0 0h7v1h-1v1h-1v1h-1v1h-1v-1h-1v-1h-1v-1h-1z"/></svg></div></div><span class="t" style="left:226.95px;top:455.95px;font-size:14px;font-weight:bold;-webkit-text-stroke:0.3px;transform:scaleX(0.8731)">Auto</span>
<div class="a combo" style="left:301px;top:451px;width:53px;height:24px;"><div class="a ddb" style="left:34px;top:1px;width:16px;height:20px;"><svg class="a" style="left:4px;top:8px" width="7" height="4" viewBox="0 0 7 4" shape-rendering="crispEdges"><path d="M0 0h7v1h-1v1h-1v1h-1v1h-1v-1h-1v-1h-1v-1h-1z"/></svg></div></div><span class="t" style="left:305.70px;top:455.95px;font-size:14px;font-weight:bold;-webkit-text-stroke:0.3px;transform:scaleX(0.8800)">ch A</span>
<div class="a combo" style="left:362px;top:451px;width:68px;height:24px;"><div class="a ddb" style="left:49px;top:1px;width:16px;height:20px;"><svg class="a" style="left:4px;top:8px" width="7" height="4" viewBox="0 0 7 4" shape-rendering="crispEdges"><path d="M0 0h7v1h-1v1h-1v1h-1v1h-1v-1h-1v-1h-1v-1h-1z"/></svg></div></div><span class="t" style="left:366.20px;top:455.95px;font-size:14px;font-weight:bold;-webkit-text-stroke:0.3px;transform:scaleX(0.9615)">Rising</span>
<div class="a combo" style="left:438px;top:451px;width:55px;height:24px;"></div>
<span class="t" style="left:440.70px;top:453.75px;font-size:14px;font-weight:bold;-webkit-text-stroke:0.3px;transform:scaleX(0.9481)">200</span>
<div class="a sp" style="left:494px;top:451px;width:12px;height:12px;"><svg class="a" style="left:2px;top:4px" width="8" height="4" viewBox="0 0 8 4" shape-rendering="crispEdges"><path d="M3 0h2v1h1v1h1v1h1v1h-8v-1h1v-1h1v-1h1z"/></svg></div><div class="a sp" style="left:494px;top:463px;width:12px;height:12px;"><svg class="a" style="left:2px;top:3px" width="8" height="6" viewBox="0 0 8 6" shape-rendering="crispEdges"><path d="M0 0h8v1h-8z" fill="#fff"/><path d="M0 1h8v2h-1v1h-1v1h-1v1h-2v-1h-1v-1h-1v-1h-1z"/></svg></div>
<span class="t" style="left:507.70px;top:455.95px;font-size:14px;font-weight:bold;-webkit-text-stroke:0.3px;transform:scaleX(0.8731)">mV</span>
<div class="a combo" style="left:554px;top:451px;width:39px;height:24px;"></div>
<span class="t" style="left:556.70px;top:453.75px;font-size:14px;font-weight:bold;-webkit-text-stroke:0.3px;transform:scaleX(0.8250)">0</span>
<div class="a sp" style="left:594px;top:451px;width:12px;height:12px;"><svg class="a" style="left:2px;top:4px" width="8" height="4" viewBox="0 0 8 4" shape-rendering="crispEdges"><path d="M3 0h2v1h1v1h1v1h1v1h-8v-1h1v-1h1v-1h1z"/></svg></div><div class="a sp" style="left:594px;top:463px;width:12px;height:12px;"><svg class="a" style="left:2px;top:3px" width="8" height="6" viewBox="0 0 8 6" shape-rendering="crispEdges"><path d="M0 0h8v1h-8z" fill="#fff"/><path d="M0 1h8v2h-1v1h-1v1h-1v1h-2v-1h-1v-1h-1v-1h-1z"/></svg></div>
<span class="t" style="left:606.70px;top:455.95px;font-size:14px;font-weight:bold;-webkit-text-stroke:0.3px;transform:scaleX(0.8923)">%</span>
</body></html>
